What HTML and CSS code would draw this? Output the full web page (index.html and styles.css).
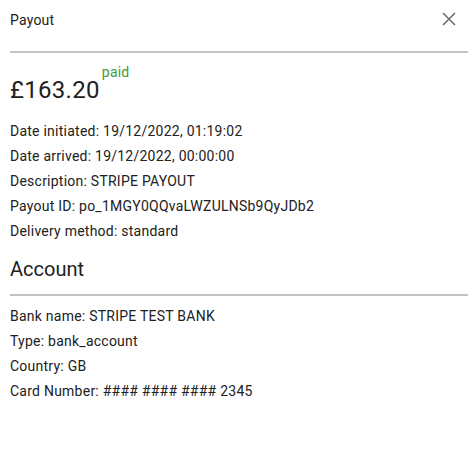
FILE: index.html
```html
<!DOCTYPE html>
<html lang="en">
<head>
<meta charset="utf-8">
<title>Payout</title>
<link rel="stylesheet" href="styles.css">
</head>
<body>
<div class="dialog">
  <header class="header">
    <span class="title">Payout</span>
    <button class="close" aria-label="Close">
      <svg width="14" height="14" viewBox="0 0 14 14"><path d="M1 1L13 13M13 1L1 13" stroke="#6f6f6f" stroke-width="1.6" fill="none"/></svg>
    </button>
  </header>
  <div class="divider"></div>
  <div class="amount-row">
    <span class="amount">£163.20</span>
    <span class="status">paid</span>
  </div>
  <div class="details">
    <div class="line">Date initiated: 19/12/2022, 01:19:02</div>
    <div class="line">Date arrived: 19/12/2022, 00:00:00</div>
    <div class="line">Description: STRIPE PAYOUT</div>
    <div class="line">Payout ID: po_1MGY0QQvaLWZULNSb9QyJDb2</div>
    <div class="line">Delivery method: standard</div>
  </div>
  <h2 class="section-title">Account</h2>
  <div class="divider divider-account"></div>
  <div class="details account">
    <div class="line">Bank name: STRIPE TEST BANK</div>
    <div class="line">Type: bank_account</div>
    <div class="line">Country: GB</div>
    <div class="line">Card Number: #### #### #### 2345</div>
  </div>
</div>
</body>
</html>
```

FILE: styles.css
```css
* { box-sizing: border-box; }
html, body {
  margin: 0;
  padding: 0;
  background: #ffffff;
}
body {
  font-family: Roboto, "Noto Sans", Arial, sans-serif;
  color: #212121;
}
.dialog {
  padding: 0 6px 0 10px;
}
.header {
  display: flex;
  justify-content: space-between;
  align-items: flex-start;
  padding-top: 10px;
  height: 51px;
}
.title {
  font-size: 14px;
  line-height: 20px;
  letter-spacing: 0.2px;
}
.close {
  border: 0;
  background: none;
  padding: 0;
  margin: 2px 12px 0 0;
  width: 14px;
  height: 14px;
  display: block;
  cursor: pointer;
}
.close svg { display: block; }
.divider {
  height: 2px;
  background: #c2c2c2;
}
.amount-row {
  display: flex;
  align-items: flex-start;
  margin-top: 10px;
}
.amount {
  font-size: 24px;
  line-height: 28px;
  letter-spacing: 0.3px;
  margin-top: 13px;
}
.status {
  font-size: 14px;
  line-height: 16px;
  letter-spacing: 0.2px;
  color: #3f9a3a;
  margin-left: 2px;
  margin-top: 1px;
}
.details {
  margin-top: 15px;
}
.line {
  font-size: 14px;
  line-height: 25px;
  letter-spacing: 0.24px;
  white-space: nowrap;
}
.section-title {
  font-size: 20px;
  font-weight: 400;
  line-height: 24px;
  margin: 13px 0 0 0;
}
.divider-account {
  margin-top: 13px;
}
.account {
  margin-top: 8px;
}
```
